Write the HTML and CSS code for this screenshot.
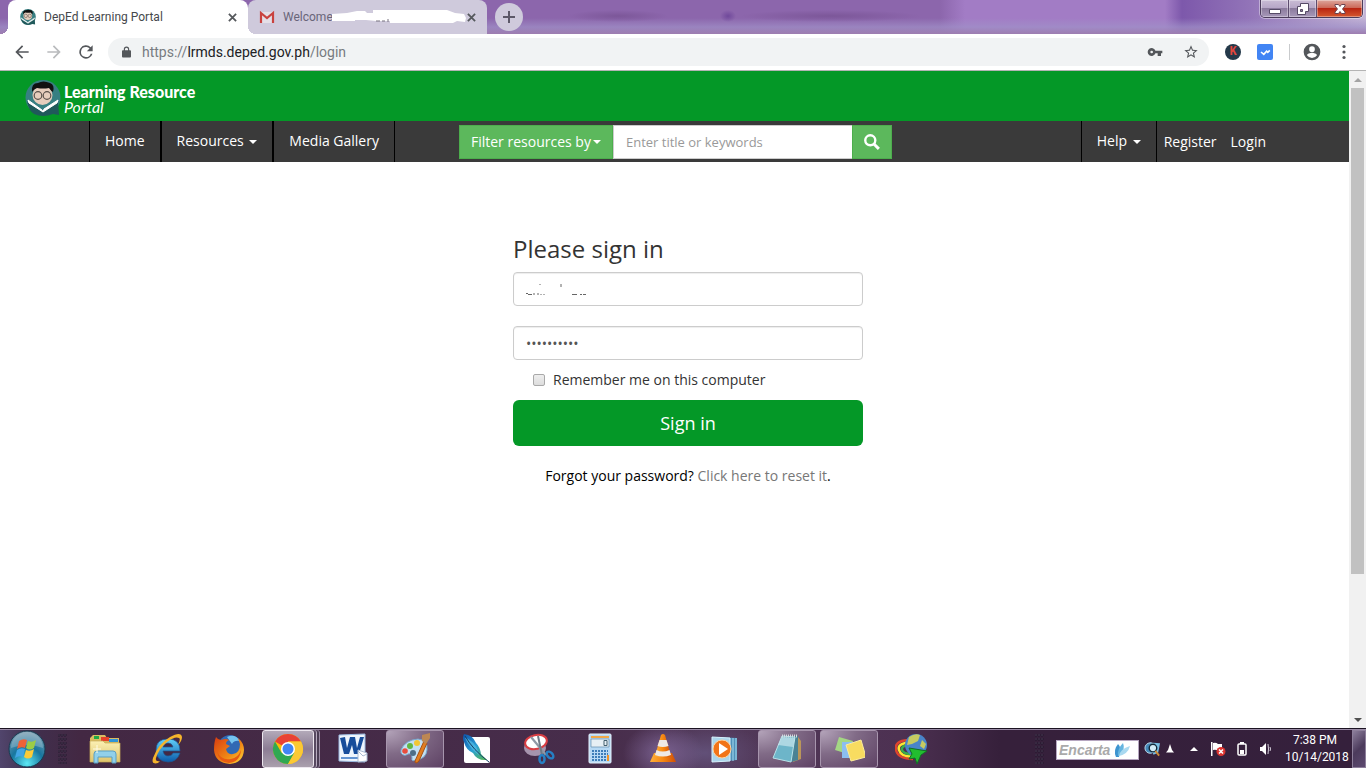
FILE: index.html
```html
<!DOCTYPE html>
<html lang="en">
<head>
  <meta charset="UTF-8">
  <title>DepEd Learning Portal</title>
  <meta name="viewport" content="width=device-width, initial-scale=1.0">
  <link rel="stylesheet" href="styles.css">
</head>
<body>
  <svg class="defs" aria-hidden="true">
    <defs>
      <symbol id="reader" viewBox="0 0 36 36">
        <circle cx="18" cy="17.500" r="17.500" fill="#377f82"/>
        <path d="M2 22l16 10 15-11 1 14-6-1q-10 4-19 0-5-3-7-12z" fill="#20595b"/>
        <circle cx="17.500" cy="15" r="10" fill="#e6cdbd"/>
        <path d="M7 12Q6 3 13 3q5-3 12 0 5 2 3 9-2-1-4-4-6 1-12 0-3 1-5 4z" fill="#111"/>
        <g fill="none" stroke="#5a504a" stroke-width="1.200"><circle cx="13" cy="15.500" r="3.800"/><circle cx="22" cy="15.500" r="3.800"/></g>
        <path d="M3 20l14 10 1 2-14-9zM33 20L19 29l-1 3 14-9z" fill="#fff" stroke="#fff"/>
      </symbol>
      <radialGradient id="orb" cx=".5" cy=".9" r=".9"><stop offset="0" stop-color="#5ce8f4"/><stop offset=".5" stop-color="#17769f"/><stop offset="1" stop-color="#7d9db0"/></radialGradient>
      <linearGradient id="folder" x2="0" y2="1"><stop offset="0" stop-color="#fbf0b4"/><stop offset="1" stop-color="#dfc46b"/></linearGradient>
      <linearGradient id="blue" x2="0" y2="1"><stop offset="0" stop-color="#62d0fa"/><stop offset="1" stop-color="#0b5aa9"/></linearGradient>
      <linearGradient id="feather" x2="1" y2="1"><stop offset="0" stop-color="#0d4fa8"/><stop offset=".5" stop-color="#2a9fd6"/><stop offset="1" stop-color="#55b945"/></linearGradient>
      <linearGradient id="fox" x2="1" y2="1"><stop offset="0" stop-color="#d83a10"/><stop offset=".6" stop-color="#f18a16"/><stop offset="1" stop-color="#ffd83a"/></linearGradient>
      <linearGradient id="cone" x2="1" y2="0"><stop offset="0" stop-color="#ffb13c"/><stop offset=".5" stop-color="#f78812"/><stop offset="1" stop-color="#cf4e05"/></linearGradient>
    </defs>
  </svg>

  <header class="tabstrip">
    <div class="tab active">
      <svg class="favicon" aria-hidden="true"><use href="#reader"/></svg>
      <span>DepEd Learning Portal</span>
      <button class="tab-close" aria-label="Close tab"><svg viewBox="0 0 10 10"><path d="M1 1l8 8M9 1L1 9"/></svg></button>
    </div>
    <div class="tab">
      <svg class="favicon" viewBox="0 0 16 16" aria-hidden="true"><path d="M1 3h14v11H1z" fill="#e4dfe7"/><path d="M2 14V4l6 5 6-5v10" fill="none" stroke="#c9423f" stroke-width="2.200"/></svg>
      <span>Welcome</span>
      <button class="tab-close" aria-label="Close tab"><svg viewBox="0 0 10 10"><path d="M1 1l8 8M9 1L1 9"/></svg></button>
      <svg class="smudge" viewBox="0 0 134 14" aria-hidden="true"><path d="M0 4l15-1 10-2h8l2 2h6V0h74l8 3 9 1 2 4-1 4-8-1-4 2H58v-2H44l-10-1H23v1H0z" fill="#fff"/><path d="M44 11h4M50 11h3M56 9v3" stroke="#77717f"/></svg>
    </div>
    <button class="new-tab" aria-label="New tab"><svg viewBox="0 0 12 12"><path d="M6 0v12M0 6h12"/></svg></button>
    <div class="window-buttons">
      <button aria-label="Minimize"><svg viewBox="0 0 16 14"><path d="M2.500 7.500h11v4h-11z" fill="#fff" stroke="#564b67"/></svg></button>
      <button aria-label="Restore"><svg viewBox="0 0 16 14"><path d="M5.500 1.500h8v8h-3v3h-8v-8h3z" fill="#fff" stroke="#564b67"/><path d="M5.500 7.500h2v2h-2z" fill="#8b7e9b" stroke="#564b67"/></svg></button>
      <button class="close" aria-label="Close"><svg viewBox="0 0 16 14"><path d="M3 2.500h3.500L8 4.500l1.500-2H13v1.500L10.500 7l2.500 3v1.500H9.500L8 9.500l-1.500 2H3V10l2.500-3L3 4z" fill="#fff" stroke="#6a4350"/></svg></button>
    </div>
  </header>

  <div class="toolbar">
    <button aria-label="Back"><svg viewBox="0 0 24 24"><path d="M20 11H7.800l5.600-5.600L12 4l-8 8 8 8 1.400-1.400L7.800 13H20z"/></svg></button>
    <button class="disabled" aria-label="Forward"><svg viewBox="0 0 24 24"><path d="M4 11h12.200l-5.600-5.600L12 4l8 8-8 8-1.400-1.400 5.600-5.600H4z"/></svg></button>
    <button aria-label="Reload"><svg viewBox="0 0 24 24"><path d="M17.650 6.350A8 8 0 1 0 19.730 14h-2.080A6 6 0 1 1 12 6c1.660 0 3.140.69 4.220 1.780L13 11h7V4z"/></svg></button>
    <div class="omnibox">
      <svg class="lock" viewBox="0 0 10 14" aria-hidden="true"><path d="M1 5h1V4a3 3 0 0 1 6 0v1h1q1 0 1 1v6q0 1-1 1H1q-1 0-1-1V6q0-1 1-1zm2.300 0h3.400V4a1.700 1.700 0 0 0-3.400 0z" fill-rule="evenodd"/></svg>
      <div class="url">https://<b>lrmds.deped.gov.ph</b>/login</div>
      <button aria-label="Saved passwords"><svg viewBox="0 0 24 24"><path d="M12.650 10A6 6 0 1 0 12.650 14H16v4h5v-4h2v-4zM7 14a2 2 0 1 1 0-4 2 2 0 0 1 0 4z"/></svg></button>
      <button aria-label="Bookmark this page"><svg viewBox="0 0 24 24"><path d="M22 9.240l-7.190-.62L12 2 9.190 8.630 2 9.240l5.460 4.730L5.820 21 12 17.270 18.180 21l-1.630-7.030zM12 15.400l-3.760 2.270 1-4.280-3.320-2.880 4.380-.38L12 6.100l1.710 4.040 4.380.38-3.320 2.880 1 4.280z"/></svg></button>
    </div>
    <div class="extensions">
      <button class="ext-k" aria-label="Extension K">K</button>
      <button class="ext-check" aria-label="Extension check"><svg viewBox="0 0 20 20"><path d="M5 10l3.500 3 3.500-4 1.500 1.500L16 8" fill="none" stroke="#fff" stroke-width="2"/></svg></button>
    </div>
    <div class="profile">
      <button aria-label="Profile"><svg viewBox="0 0 24 24"><path d="M12 2a10 10 0 1 0 0 20 10 10 0 0 0 0-20zm0 3.200a3.400 3.400 0 1 1 0 6.800 3.400 3.400 0 0 1 0-6.800zM12 19.200A7.200 7.200 0 0 1 6 16c0-2 4-3.100 6-3.100s6 1.100 6 3.100a7.200 7.200 0 0 1-6 3.200z"/></svg></button>
      <button class="menu" aria-label="Menu"><svg viewBox="0 0 4 16"><circle cx="2" cy="2.500" r="1.600"/><circle cx="2" cy="8" r="1.600"/><circle cx="2" cy="13.500" r="1.600"/></svg></button>
    </div>
  </div>

  <div class="viewport">
    <div class="page">
      <div class="brand-bar">
        <a class="brand" href="#">
          <svg aria-hidden="true"><use href="#reader"/></svg>
          <span class="brand-name"><strong>Learning Resource</strong><em>Portal</em></span>
        </a>
      </div>
      <nav class="navbar">
        <ul class="nav-left">
          <li><a href="#">Home</a></li>
          <li><a href="#">Resources <i class="caret"></i></a></li>
          <li><a href="#">Media Gallery</a></li>
        </ul>
        <form class="search">
          <button type="button" class="filter">Filter resources by <i class="caret"></i></button>
          <input type="text" placeholder="Enter title or keywords" aria-label="Search resources">
          <button type="button" class="go" aria-label="Search"><svg viewBox="0 0 14 14"><circle cx="5.500" cy="5.500" r="4.400" fill="none" stroke="#fff" stroke-width="2.100"/><path d="M8.700 8.700l4.300 4.300" stroke="#fff" stroke-width="2.600"/></svg></button>
        </form>
        <ul class="nav-right">
          <li class="help"><a href="#">Help <i class="caret"></i></a></li>
          <li><a href="#">Register</a></li>
          <li><a href="#">Login</a></li>
        </ul>
      </nav>
      <main>
        <form class="signin">
          <h2>Please sign in</h2>
          <div class="field">
            <input type="text" aria-label="Username">
            <svg class="erased" viewBox="0 0 62 14" aria-hidden="true"><path d="M0 10.500h2M2 11.500h4M8 10v2M12 10v2M15 11v1M18 11v1M14 1v1M35 1v3M46 11.500h5M54 11.500h2M57 11.500h3" stroke="#666"/></svg>
          </div>
          <div class="field">
            <input type="password" value="password12" aria-label="Password">
          </div>
          <label class="remember"><input type="checkbox"> Remember me on this computer</label>
          <button type="button" class="submit">Sign in</button>
          <p>Forgot your password? <a href="#">Click here to reset it</a>.</p>
        </form>
      </main>
    </div>
    <div class="scrollbar" aria-hidden="true">
      <i class="arrow up"></i>
      <div class="track"><div class="thumb"></div></div>
      <i class="arrow down"></i>
    </div>
  </div>

  <footer class="taskbar">
    <button class="start" aria-label="Start">
      <svg viewBox="0 0 38 38"><circle cx="19" cy="19" r="18" fill="url(#orb)" stroke="#173a50"/><path d="M3 18a16 16 0 0 1 32 0q-16-6-32 0z" fill="#fff" opacity=".22"/><path d="M11 11q4-3 8-1l-2 8q-4-2-8 1z" fill="#ee6238"/><path d="M20 11q4 2 8-1l-2 8q-4 3-8 0z" fill="#9ccc45"/><path d="M9 20q4-3 8-1l-2 8q-4-2-8 1z" fill="#42a5e4"/><path d="M18 20q4 2 8-1l-2 8q-4 3-8 0z" fill="#fbcb38"/></svg>
    </button>
    <span class="grip"></span>
    <div class="tasks">
      <button aria-label="Explorer"><svg viewBox="0 0 32 32"><path d="M1 5l3-3h12l2 3h12v23H1z" fill="#d9bc62"/><path d="M5 3h5v3H5z" fill="#20a845"/><path d="M12 4h8v4h-8z" fill="#e4412b"/><path d="M20 6h9v3h-9z" fill="#2f95d8"/><path d="M1 8h13l2 2h15v19H1z" fill="url(#folder)" stroke="#c9ad56" stroke-width=".700"/><path d="M5 30V21q0-3 3-3h16q3 0 3 3v9h-4v-6H9v6z" fill="#91d0ea" stroke="#5b9fc2"/><path d="M8 12v8M4 16h8" stroke="#fffce5"/></svg></button>
      <button aria-label="Internet Explorer"><svg viewBox="0 0 32 32"><path d="M29 18H12q1 5 5 5t5-3h7q-3 9-12 9Q5 28 5 17T17 6q12 0 12 12zM12 14h10q-1-4-5-4t-5 4z" fill="url(#blue)" stroke="#1b5793" stroke-width=".700" fill-rule="evenodd"/><path d="M7 30Q0 32 2 25 7 11 19 4q11-6 12 0 0 4-4 8 3-6 1-7-4-2-12 4Q7 17 5 25q-1 4 4 3z" fill="#f5b42c"/></svg></button>
      <button aria-label="Firefox"><svg viewBox="0 0 32 32"><circle cx="17" cy="14" r="12" fill="#3169b4"/><path d="M14 4q8-4 13 4-6-1-8 3z" fill="#75c4ef"/><path d="M3 4q2 3 5 3 5-2 8 0-3 1-3 4l4 2-4 3q1 6 7 5 7-1 7-10l-2-6q6 5 6 12-1 13-14 14Q2 30 1 17 1 9 3 4z" fill="url(#fox)"/><path d="M4 18q4 10 14 8 7-1 10-9-1 12-12 13Q5 29 4 18z" fill="#e85b12"/></svg></button>
      <button class="open stacked" aria-label="Chrome"><svg viewBox="0 0 32 32"><circle cx="16" cy="16" r="15" fill="#fbbc04"/><path d="M16 16L3 8.500A15 15 0 0 1 29 8.500H16z" fill="#e94235"/><path d="M3 8.500A15 15 0 0 0 16 31l6.500-11.200-13-.1z" fill="#30a852"/><path d="M16 8.500h13A15 15 0 0 1 16 31l6.500-11.500z" fill="#fcc934"/><circle cx="16" cy="16" r="7" fill="#fff"/><circle cx="16" cy="16" r="5.500" fill="#4285f4"/></svg></button>
      <button aria-label="Word"><svg viewBox="0 0 32 32"><path d="M2 2l26-1v28L2 28z" fill="#eef5fd" stroke="#9bb9e0"/><path d="M3 5l5-1 2 11 3-11h5l2 11 3-11h4l-5 17h-5l-2-9-3 9H7z" fill="#174d9b"/><path d="M4 25h18" stroke="#6394d2" stroke-width="2"/><path d="M21 17l9 3v8l-9 1z" fill="#fff" stroke="#aabbd2"/><path d="M21 18l5 5 4-2" fill="none" stroke="#aabbd2"/></svg></button>
      <button class="open" aria-label="Paint"><svg viewBox="0 0 32 32"><path d="M2 17Q6 7 19 6q10 1 9 11-1 9-11 10-5 2-4-2 0-5-4-4-4 3-7-1z" fill="#c3e0f3" stroke="#77a8cd"/><circle cx="14" cy="20" r="3" fill="#4e6e87"/><circle cx="6" cy="18" r="2.800" fill="#e84d3d"/><circle cx="11" cy="13" r="3" fill="#61b644"/><circle cx="18" cy="10" r="3" fill="#f2c735"/><path d="M25 8l3 2-8 18q-4 4-4 0z" fill="#e27d1f" stroke="#a65215"/><path d="M23 2l8-2v5l-4 6-4-3z" fill="#bc8754"/></svg></button>
      <button aria-label="Photo editor"><svg viewBox="0 0 32 32"><path d="M3 5q0-1 2-1h22q2 0 2 2v22q0 2-2 2H5q-2 0-2-2z" fill="#fff"/><path d="M3 1q9 1 12 9 4 4 5 11l6 6q-10 1-14-7Q5 17 3 9 1 5 3 1z" fill="url(#feather)"/><path d="M4 5q5 11 14 17-2-10-8-14Q7 5 4 5z" fill="#56bfe6" opacity=".700"/><path d="M4 3q8 14 24 26" fill="none" stroke="#163f66"/></svg></button>
      <button aria-label="Snipping Tool"><svg viewBox="0 0 32 32"><ellipse cx="12" cy="15" rx="11" ry="8" fill="#a594ad"/><ellipse cx="13" cy="9" rx="11" ry="7" fill="#fff" stroke="#d83d43" stroke-width="2" transform="rotate(-12 13 9)"/><path d="M8 4l15 18" stroke="#8f99a5" stroke-width="2.200"/><path d="M15 3l4 19" stroke="#6f7a86" stroke-width="2"/><g fill="none" stroke="#267fc3" stroke-width="2.500"><ellipse cx="19" cy="26" rx="2.500" ry="4"/><ellipse cx="27" cy="22" rx="2.500" ry="4" transform="rotate(-45 27 22)"/></g></svg></button>
      <button aria-label="Calculator"><svg viewBox="0 0 32 32"><rect x="4" y="1" width="22" height="29" rx="1" fill="#b7d9f4" stroke="#e6f4ff"/><path d="M6 3h18v2H6z" fill="#f1a849"/><path d="M6 6h18v8H6z" fill="#e7eff4" stroke="#628dad" stroke-width=".700"/><path d="M19 7.500h3v5h-3z" fill="none" stroke="#44606f"/><path d="M7 18h16M7 21h16M7 24h16M7 27h16" stroke="#3d7db8" stroke-width="2" stroke-dasharray="2 1"/><path d="M22 22h2v6h-2z" fill="#f39224"/></svg></button>
      <button aria-label="VLC"><svg viewBox="0 0 32 32"><path d="M7 20h18l4 9H3z" fill="url(#cone)"/><path d="M14 2q2-2 4 0l6 21q-8 4-16 0z" fill="url(#cone)"/><path d="M12.500 7h7l2 6q-6 2-11 0zM9.500 17q6 3 13 0l1.500 5q-8 3-16 0z" fill="#eee9e5"/></svg></button>
      <button aria-label="Media Player"><svg viewBox="0 0 32 32"><path d="M7 4l21 1v22L9 29z" fill="#4f91b9"/><path d="M27 5v22M24 5v23" stroke="#a8ddf2"/><path d="M3 4l18 1v23L3 29z" fill="#aad5eb" stroke="#d8f1fc"/><circle cx="13" cy="16" r="9" fill="#f17418" stroke="#ffd4a1"/><path d="M10 10l9 6-9 6z" fill="#fff"/></svg></button>
      <button class="open" aria-label="Notepad"><svg viewBox="0 0 32 32"><path d="M27 4l3 4v18l-8 3z" fill="#ba965a"/><path d="M11 3h16v24l-7 2z" fill="#4a8294"/><path d="M11 3l13 1-4 25-18-4z" fill="#6db5c9" stroke="#b8e3e9"/><path d="M11 4l13 1-2 9-15-2z" fill="#c9e6ec" opacity=".700"/><path d="M11 3h16" stroke="#d3dce0" stroke-width="3" stroke-dasharray="1 1"/></svg></button>
      <button class="open" aria-label="Sticky Notes"><svg viewBox="0 0 32 32"><path d="M6 4l14 4-5 13-13-4z" fill="#a4d784"/><path d="M9 9h14v16H9z" fill="#8bbef0"/><path d="M13 12l15-5 5 17-15 4z" fill="#f8dc60" stroke="#fcec9b"/></svg></button>
      <button aria-label="Download Manager"><svg viewBox="0 0 32 32"><path d="M13 7Q-1 8 1 17q2 9 17 9" fill="none" stroke="#df442d" stroke-width="2.500"/><path d="M13 9.500Q2 11 4 17q2 7 14 6.500" fill="none" stroke="#ffe533" stroke-width="2.500"/><path d="M13 12q-7 1-6 5 1 4 10 4" fill="none" stroke="#38ae4a" stroke-width="2.500"/><circle cx="21" cy="12" r="11" fill="#4984c9"/><path d="M14 4q6-4 11-2l-2 6-6 3-5 1zM27 7l4 4-2 5-4-3z" fill="#c6ca61"/><path d="M14 15l18 3-6 4-4 9-2-6-6 1 3-5z" fill="#22bd2f" stroke="#126c26"/></svg></button>
    </div>
    <div class="tray">
      <span class="grip"></span>
      <div class="encarta">Encarta <svg viewBox="0 0 18 14" aria-hidden="true"><path d="M3 14Q0 7 5 1q4 3 1 13z" fill="#3d94d0"/><path d="M5 13Q4 6 10 0q3 7-4 13z" fill="#65b5e0"/><path d="M6 13q1-7 11-10-2 8-11 10z" fill="#a9d9f0"/></svg></div>
      <svg class="lookup" viewBox="0 0 18 16" aria-hidden="true"><path d="M6 1l11 1-2 10-5 2z" fill="#79c0e4"/><circle cx="6.500" cy="7" r="5.500" fill="#4488b8" stroke="#bfe0ef"/><circle cx="9.500" cy="7" r="4" fill="#d3edf8" stroke="#112a3b" stroke-width="1.500"/><path d="M12 10l4 5" stroke="#ce8b37" stroke-width="2"/></svg>
      <svg class="lift" viewBox="0 0 8 9" aria-hidden="true"><path d="M4 0l2 6 2 2.500H0L2 6z"/></svg>
      <svg class="expand" viewBox="0 0 8 4" aria-hidden="true"><path d="M4 0l4 4H0z"/></svg>
      <svg class="flag" viewBox="0 0 16 16" aria-hidden="true"><path d="M1 1h1.500v14H1zM3 2q3-1 5 1h4v7H8q-2-2-5-1z"/><circle cx="11" cy="10.500" r="4.500" fill="#dc3430"/><path d="M9 8.500l4 4M13 8.500l-4 4" stroke="#fff" stroke-width="1.500"/></svg>
      <svg class="battery" viewBox="0 0 10 14" aria-hidden="true"><path d="M3 0h4v2H3z"/><rect x="1" y="2" width="8" height="11" rx="1" fill="none" stroke="#fff" stroke-width="1.500"/><path d="M3 8h4v4H3z"/></svg>
      <svg class="sound" viewBox="0 0 14 14" aria-hidden="true"><path d="M1 5h2l4-4v12L3 9H1z"/><path d="M9 2q1 5 0 10M11 5q1 2 0 4" fill="none" stroke="#d5cedb"/></svg>
      <time class="clock">7:38 PM<br>10/14/2018</time>
      <button class="show-desktop" aria-label="Show desktop"></button>
    </div>
  </footer>
</body>
</html>
```
FILE: styles.css
```css
* {
  box-sizing: border-box;
}
body {
  margin: 0;
  height: 100vh;
  display: flex;
  flex-direction: column;
  overflow: hidden;
  background: #fff;
  font-family: "Open Sans", sans-serif;
  font-size: 14px;
  line-height: 20px;
  color: #333;
}
button {
  border: 0;
  padding: 0;
  background: none;
  font: inherit;
  color: inherit;
  display: flex;
  align-items: center;
  justify-content: center;
}
a {
  color: inherit;
  text-decoration: none;
}
ul {
  list-style: none;
  margin: 0;
  padding: 0;
}
.defs {
  position: absolute;
  width: 0;
  height: 0;
}

/* tabs */
.tabstrip {
  flex: none;
  display: flex;
  height: 34px;
  padding-left: 8px;
  position: relative;
  font-family: Roboto, sans-serif;
  font-size: 12px;
  background:
    radial-gradient(ellipse at 0 50%, #b898c8 0, transparent 20px),
    radial-gradient(ellipse 8px 6px at 728px 16px, #70499b, transparent),
    radial-gradient(ellipse 50px 6px at 618px 16px, #7c5799, transparent),
    radial-gradient(ellipse 90px 6px at 830px 16px, #7c5799, transparent),
    linear-gradient(transparent 18px, rgba(160, 145, 200, .7) 27px, #9d7db0 34px),
    linear-gradient(90deg, #8c66ac 0, #8c66ac 940px, #a27cc5 965px, #a27cc5 1165px, #7d58ab 1182px, #9274b8 1250px, #c4b5d6 100%);
}
.tab {
  position: relative;
  display: flex;
  align-items: center;
  width: 239px;
  padding: 0 10px 0 11px;
  border-radius: 8px 8px 0 0;
  background: #cfcadc;
  color: #696579;
}
.tab.active {
  z-index: 1;
  width: 240px;
  padding-left: 12px;
  background: #fff;
  color: #45484c;
}
.tab.active::before,
.tab.active::after {
  content: "";
  position: absolute;
  bottom: 0;
  width: 8px;
  height: 8px;
}
.tab.active::before {
  left: -8px;
  background: radial-gradient(circle at 0 0, transparent 8px, #fff 8px);
}
.tab.active::after {
  right: -8px;
  background: radial-gradient(circle at 100% 0, transparent 8px, #fff 8px);
}
.favicon {
  width: 16px;
  height: 16px;
  margin-right: 8px;
}
.tab-close {
  margin-left: auto;
  width: 12px;
  height: 12px;
}
.tab-close svg {
  width: 9px;
  height: 9px;
  stroke: #55585c;
  stroke-width: 2;
}
.smudge {
  position: absolute;
  left: 84px;
  top: 10px;
  width: 134px;
  height: 14px;
}
.new-tab {
  width: 28px;
  height: 28px;
  margin: 3px 0 0 8px;
  border-radius: 50%;
  background: #cfcadc;
}
.new-tab svg {
  width: 12px;
  height: 12px;
  stroke: #5c5868;
  stroke-width: 2;
}
.window-buttons {
  display: flex;
  width: 103px;
  height: 18px;
  margin: 0 3px 0 auto;
  border: 1px solid #4b3c5b;
  border-top: 0;
  border-radius: 0 0 5px 5px;
  box-shadow: 0 0 0 1px rgba(255, 255, 255, .4);
  overflow: hidden;
}
.window-buttons button {
  width: 28px;
  background: linear-gradient(#c9bcd5, #b7a7c7 45%, #8b7b9d 50%, #a798b9);
  border-right: 1px solid #5d4c6e;
  box-shadow: inset 0 0 0 1px rgba(255, 255, 255, .35);
}
.window-buttons .close {
  flex: 1;
  border: 0;
  background: linear-gradient(#dda69d, #cc6a5a 45%, #b92512 50%, #d5582f);
}
.window-buttons svg {
  width: 16px;
  height: 14px;
}

/* address bar */
.toolbar {
  flex: none;
  display: flex;
  align-items: center;
  height: 37px;
  padding: 0 14px 0 12px;
  border-bottom: 1px solid #b4b4b4;
  background: #fff;
}
.toolbar button {
  width: 20px;
  height: 20px;
  margin-right: 12px;
}
.toolbar svg {
  width: 20px;
  height: 20px;
  fill: #54575b;
}
.toolbar .disabled svg {
  fill: #b9bbbd;
}
.omnibox {
  flex: 1;
  display: flex;
  align-items: center;
  height: 28px;
  padding: 0 8px 0 14px;
  border-radius: 14px;
  background: #f1f3f4;
}
.omnibox .lock {
  width: 9px;
  height: 14px;
  margin-right: 11px;
}
.url {
  flex: 1;
  font-family: Roboto, sans-serif;
  font-size: 14px;
  color: #777b80;
}
.url b {
  font-weight: normal;
  color: #202124;
}
.omnibox button {
  margin: 0 0 0 16px;
}
.omnibox button svg {
  width: 16px;
  height: 16px;
}
.extensions {
  display: flex;
  gap: 16px;
  padding: 0 16px;
  border-right: 1px solid #c9cbcd;
}
.toolbar .extensions button {
  width: 16px;
  height: 16px;
  margin: 0;
}
.toolbar .ext-k {
  border-radius: 50%;
  background: #24394a;
  color: #e2473d;
  font: bold 12px/16px "Liberation Mono", monospace;
}
.ext-check {
  border-radius: 2px;
  background: #4285f4;
}
.profile {
  display: flex;
  align-items: center;
  gap: 14px;
  padding-left: 12px;
}
.toolbar .profile button {
  margin: 0;
}
.toolbar .profile .menu {
  width: 16px;
}
.toolbar .menu svg {
  width: 4px;
  height: 16px;
}

/* portal */
.viewport {
  flex: 1;
  display: flex;
  min-height: 0;
}
.page {
  flex: 1;
  overflow: hidden;
}
.brand-bar {
  height: 50px;
  padding: 9px 25px;
  background: #049827;
}
.brand {
  display: inline-flex;
  gap: 3px;
  color: #fff;
}
.brand svg {
  width: 36px;
  height: 36px;
}
.brand-name {
  display: flex;
  flex-direction: column;
  padding-top: 4px;
  font: 16px/15px Lato, sans-serif;
}
.brand-name strong {
  font-weight: 900;
}
.navbar {
  display: flex;
  height: 41px;
  padding: 0 83px 0 89px;
  background: #3a3a3a;
  color: #fff;
}
.navbar ul {
  display: flex;
}
.nav-left a,
.help a {
  display: block;
  height: 41px;
  padding: 10px 15px;
  border: 1px solid #000;
  border-width: 0 1px;
}
.caret {
  display: inline-block;
  margin-left: 2px;
  vertical-align: middle;
  border: 4px solid transparent;
  border-top-color: currentColor;
  border-bottom: 0;
}
.search {
  display: flex;
  width: 433px;
  height: 34px;
  margin: 4px 0 0 64px;
}
.search button {
  background: #5cb85c;
  border: 1px solid #4cae4c;
  color: #fff;
}
.filter {
  width: 154px;
  white-space: nowrap;
}
.search input {
  flex: 1;
  min-width: 0;
  padding: 6px 12px;
  border: 1px solid #ccc;
  border-right: 0;
  font: 13px "Open Sans", sans-serif;
}
.search input::placeholder {
  color: #999;
}
.go {
  width: 40px;
}
.go svg {
  width: 16px;
  height: 16px;
}
.nav-right {
  margin-left: auto;
  gap: 14px;
}
.nav-right li {
  padding-top: 11px;
}
.nav-right .help {
  padding: 0;
  margin-right: -7px;
}
main {
  padding: 72px 0 0 27px;
}
.signin {
  width: 350px;
  margin: 0 auto;
}
.signin h2 {
  margin: 0 0 8px;
  font-size: 24px;
  font-weight: normal;
  line-height: 30px;
}
.field {
  position: relative;
  margin-bottom: 20px;
}
.field input {
  display: block;
  width: 100%;
  height: 34px;
  padding: 6px 12px;
  border: 1px solid #ccc;
  border-radius: 4px;
  box-shadow: inset 0 1px 1px rgba(0, 0, 0, .075);
  font: 14px "Open Sans", sans-serif;
  color: #555;
}
.erased {
  position: absolute;
  left: 13px;
  top: 11px;
  width: 62px;
  height: 14px;
}
.remember {
  display: flex;
  align-items: center;
  gap: 8px;
  margin: -10px 0 10px;
  padding-left: 20px;
}
.remember input {
  appearance: none;
  width: 12px;
  height: 12px;
  margin: 0;
  border: 1px solid #a9a9a9;
  border-radius: 2px;
  background: linear-gradient(#eee, #ddd);
}
.submit {
  width: 100%;
  height: 46px;
  border-radius: 6px;
  background: #049827;
  color: #fff;
  font-size: 18px;
}
.signin p {
  margin: 20px 0;
  text-align: center;
  color: #000;
}
.signin p a {
  color: #777;
}
.scrollbar {
  width: 17px;
  display: flex;
  flex-direction: column;
  align-items: center;
  background: #f1f1f1;
}
.arrow {
  flex: none;
  width: 8px;
  height: 4px;
  margin: 7px 0 6px;
  border: 4px solid transparent;
}
.arrow.up {
  border-top: 0;
  border-bottom-color: #a3a3a3;
}
.arrow.down {
  border-bottom: 0;
  border-top-color: #505050;
}
.track {
  flex: 1;
  width: 13px;
}
.thumb {
  height: 78%;
  background: #c1c1c1;
}

/* taskbar */
.taskbar {
  flex: none;
  display: flex;
  align-items: center;
  height: 40px;
  padding-left: 8px;
  border-top: 1px solid #1b1322;
  box-shadow: inset 0 1px #9a8ba6;
  background:
    radial-gradient(ellipse 40px 30px at 663px 24px, #79608f, transparent),
    radial-gradient(ellipse 60px 30px at 705px 24px, #625078, transparent),
    linear-gradient(90deg, #51456c 0, #40304e 30px, #432843 80px, #472d4b 600px, #513858 740px, #4d3152 900px, #36203b 1000px, #35203c 100%);
}
.start {
  width: 38px;
  height: 38px;
}
.start svg {
  width: 38px;
  height: 38px;
}
.grip {
  width: 9px;
  height: 30px;
  margin-left: 12px;
  background: radial-gradient(circle at 1px 1px, #6d5a78 0, #21152a 1px, transparent 2px) 0 0 / 3px 4px;
}
.tasks {
  display: flex;
  gap: 4px;
  height: 38px;
  margin-left: 9px;
}
.tasks button {
  width: 58px;
  border-radius: 3px;
}
.tasks svg {
  width: 32px;
  height: 32px;
}
.tasks .open {
  border: 1px solid #a795ad;
  background: radial-gradient(ellipse at 0 0, #b4a4ba, #816b87 45%, #5e4264);
}
.tasks .stacked {
  width: 52px;
  margin-right: 6px;
  border-color: #ece6ee;
  background: linear-gradient(#b3a9b9, #8c7c94 50%, #aaa0ad);
  box-shadow: 2px 0 #574960, 3px 0 #b9acc0, 5px 0 #4b3d54, 6px 0 #9b8ba3;
}
.tray {
  display: flex;
  align-items: center;
  height: 39px;
  margin-left: auto;
}
.tray svg {
  flex: none;
  fill: #fff;
}
.encarta {
  display: flex;
  align-items: center;
  gap: 3px;
  width: 83px;
  height: 20px;
  margin: 3px 5px 0 12px;
  padding-left: 2px;
  border: 1px solid #b6a6c0;
  background: #fff;
  color: #aaa;
  font: italic bold 14px "Liberation Sans", sans-serif;
}
.encarta svg {
  width: 18px;
  height: 14px;
}
.lookup {
  width: 17px;
  height: 16px;
}
.lift {
  width: 8px;
  height: 9px;
  margin: 0 16px 0 5px;
}
.expand {
  width: 8px;
  height: 4px;
}
.flag {
  width: 16px;
  height: 16px;
  margin: 0 11px 0 12px;
}
.battery {
  width: 10px;
  height: 14px;
}
.sound {
  width: 14px;
  height: 14px;
  margin: 0 12px;
}
.clock {
  width: 60px;
  margin-right: 7px;
  text-align: center;
  color: #fff;
  font: 12px/17px Roboto, sans-serif;
}
.show-desktop {
  flex: none;
  width: 14px;
  height: 38px;
  border: 1px solid #8d7f9b;
  background: linear-gradient(135deg, #8c7e9b, #4c3b5c 50%, #5d4a70);
}
```
